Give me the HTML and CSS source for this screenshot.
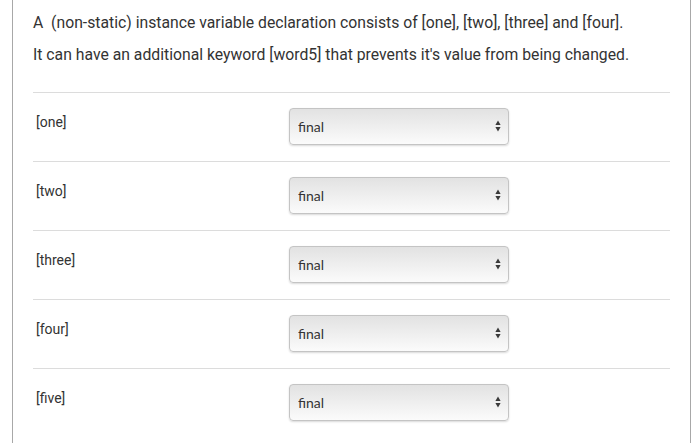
FILE: index.html
```html
<html>
<head>
	<meta charset="utf-8">
	<link rel="stylesheet" href="styles.css">
</head>
<body>
	<div class='question'>
		<p class='stem'>A&nbsp; (non-static) instance variable declaration consists of [one], [two], [three] and [four].</p>
		<p class='stem'>It can have an additional keyword [word5] that prevents it's value from being changed.</p>

		<div class='answers'>
			<div class='row'>
				<div class='label'>[one]</div>
				<div class='pick'>
					<select><option>final</option></select>
					<span class='arrows'><svg width='6' height='12' viewBox='0 0 6 12'><path d='M3 0.5 L5.6 5 L0.4 5 Z M3 11.5 L5.6 7 L0.4 7 Z' fill='#3a3a3a'/></svg></span>
				</div>
			</div>
			<div class='row'>
				<div class='label'>[two]</div>
				<div class='pick'>
					<select><option>final</option></select>
					<span class='arrows'><svg width='6' height='12' viewBox='0 0 6 12'><path d='M3 0.5 L5.6 5 L0.4 5 Z M3 11.5 L5.6 7 L0.4 7 Z' fill='#3a3a3a'/></svg></span>
				</div>
			</div>
			<div class='row'>
				<div class='label'>[three]</div>
				<div class='pick'>
					<select><option>final</option></select>
					<span class='arrows'><svg width='6' height='12' viewBox='0 0 6 12'><path d='M3 0.5 L5.6 5 L0.4 5 Z M3 11.5 L5.6 7 L0.4 7 Z' fill='#3a3a3a'/></svg></span>
				</div>
			</div>
			<div class='row'>
				<div class='label'>[four]</div>
				<div class='pick'>
					<select><option>final</option></select>
					<span class='arrows'><svg width='6' height='12' viewBox='0 0 6 12'><path d='M3 0.5 L5.6 5 L0.4 5 Z M3 11.5 L5.6 7 L0.4 7 Z' fill='#3a3a3a'/></svg></span>
				</div>
			</div>
			<div class='row'>
				<div class='label'>[five]</div>
				<div class='pick'>
					<select><option>final</option></select>
					<span class='arrows'><svg width='6' height='12' viewBox='0 0 6 12'><path d='M3 0.5 L5.6 5 L0.4 5 Z M3 11.5 L5.6 7 L0.4 7 Z' fill='#3a3a3a'/></svg></span>
				</div>
			</div>
		</div>
	</div>
</body>
</html>
```

FILE: styles.css
```css
html {
  box-sizing: border-box;
}
*, *:before, *:after {
  box-sizing: inherit;
}

body {
	margin: 0;
	background: #fff;
	font-family: Roboto, 'Liberation Sans', sans-serif;
	color: #333;
}

.question {
	margin: 0 4px 0 12px;
	border-left: 1px solid #a8a8a8;
	border-right: 1px solid #a8a8a8;
	padding: 12px 20px 40px 20px;
}

.stem {
	margin: 0 0 10px 0;
	font-size: 15.75px;
	line-height: 22px;
}

.answers {
	margin-top: 26px;
}

.row {
	display: flex;
	border-top: 1px solid #dcdcdc;
	padding: 15px 0 16px 3px;
}

.label {
	width: 253px;
	padding-top: 4px;
	font-size: 14px;
	line-height: 20px;
	color: #333;
}

.pick {
	position: relative;
	width: 220px;
	height: 37px;
}

select {
	-webkit-appearance: none;
	appearance: none;
	width: 100%;
	height: 100%;
	margin: 0;
	padding: 0 0 0 8px;
	border: 1px solid #c4c4c4;
	border-radius: 4px;
	background: linear-gradient(#e2e2e2, #fbfbfb);
	box-shadow: 0 1px 2px rgba(0,0,0,.15);
	font-family: Lato, 'Open Sans', sans-serif;
	font-size: 14px;
	color: #333;
	outline: none;
}

.arrows {
	position: absolute;
	right: 8px;
	top: 12px;
	line-height: 0;
	pointer-events: none;
}
```
